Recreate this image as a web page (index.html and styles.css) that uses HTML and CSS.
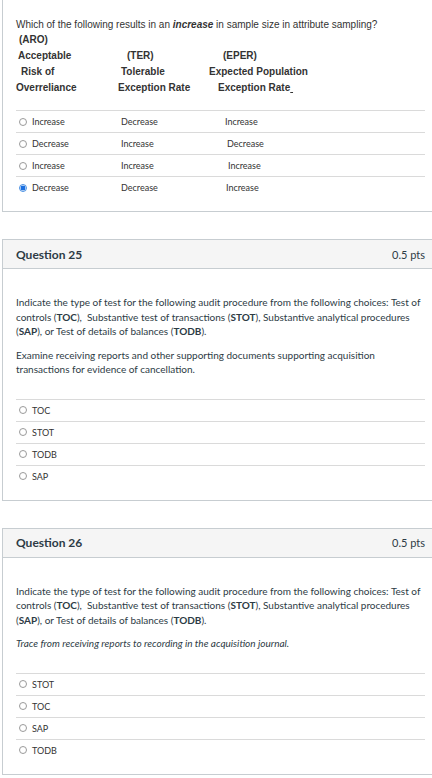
FILE: index.html
```html
<!DOCTYPE html>
<html>
<head>
<meta charset="utf-8">
<link rel="stylesheet" href="styles.css">
</head>
<body>
<div class="quiz">
  <section class="card card-first">
    <div class="body body-first">
      <p class="q1">Which of the following results in an <b><i>increase</i></b> in sample size in attribute sampling?</p>
      <div class="hdr-grid">
        <div class="c1 i3">(ARO)</div><div></div><div></div>
        <div class="c1 i2">Acceptable</div><div class="c2 i9">(TER)</div><div class="c3 i14">(EPER)</div>
        <div class="c1 i5">Risk of</div><div class="c2 i3">Tolerable</div><div class="c3">Expected Population</div>
        <div class="c1">Overreliance</div><div class="c2">Exception Rate</div><div class="c3 i9">Exception Rate<u>&nbsp;</u></div>
      </div>
      <ul class="answers">
        <li class="ans grid3"><span class="radio"></span><span>Increase</span><span>Decrease</span><span>Increase</span></li>
        <li class="ans grid3"><span class="radio"></span><span>Decrease</span><span>Increase</span><span class="s2">Decrease</span></li>
        <li class="ans grid3"><span class="radio"></span><span>Increase</span><span>Increase</span><span class="s3">Increase</span></li>
        <li class="ans grid3"><span class="radio checked"></span><span>Decrease</span><span>Decrease</span><span class="s1">Increase</span></li>
      </ul>
    </div>
  </section>

  <section class="card">
    <header class="head"><h2>Question 25</h2><span class="pts">0.5 pts</span></header>
    <div class="body">
      <p class="txt">Indicate the type of test for the following audit procedure from the following choices: Test of controls (<b>TOC</b>),&nbsp; Substantive test of transactions (<b>STOT</b>), Substantive analytical procedures (<b>SAP</b>), or Test of details of balances (<b>TODB</b>).</p>
      <p class="txt">Examine receiving reports and other supporting documents supporting acquisition transactions for evidence of cancellation.</p>
      <ul class="answers">
        <li class="ans"><span class="radio"></span><span>TOC</span></li>
        <li class="ans"><span class="radio"></span><span>STOT</span></li>
        <li class="ans"><span class="radio"></span><span>TODB</span></li>
        <li class="ans"><span class="radio"></span><span>SAP</span></li>
      </ul>
    </div>
  </section>

  <section class="card">
    <header class="head"><h2>Question 26</h2><span class="pts">0.5 pts</span></header>
    <div class="body">
      <p class="txt">Indicate the type of test for the following audit procedure from the following choices: Test of controls (<b>TOC</b>),&nbsp; Substantive test of transactions (<b>STOT</b>), Substantive analytical procedures (<b>SAP</b>), or Test of details of balances (<b>TODB</b>).</p>
      <p class="txt"><i>Trace from receiving reports to recording in the acquisition journal.</i></p>
      <ul class="answers">
        <li class="ans"><span class="radio"></span><span>STOT</span></li>
        <li class="ans"><span class="radio"></span><span>TOC</span></li>
        <li class="ans"><span class="radio"></span><span>SAP</span></li>
        <li class="ans"><span class="radio"></span><span>TODB</span></li>
      </ul>
    </div>
  </section>
</div>
</body>
</html>
```

FILE: styles.css
```css
html, body {
  margin: 0;
  padding: 0;
  background: #ffffff;
}
body {
  font-family: Lato, "Noto Sans", sans-serif;
  color: #2d3b45;
}
.quiz {
  padding-left: 2px;
  display: flex;
  flex-direction: column;
  gap: 27px;
}
.card {
  border: 1px solid #c7cdd1;
  border-right: none;
  background: #fff;
}
.card-first {
  border-top: none;
}
.head {
  background: #f5f5f5;
  border-bottom: 1px solid #c7cdd1;
  height: 28px;
  display: flex;
  align-items: center;
  justify-content: space-between;
  padding: 0 7px 0 13px;
}
.head h2 {
  margin: 0;
  font-size: 12px;
  font-weight: 700;
  color: #2d3b45;
}
.pts {
  font-size: 11px;
  color: #2d3b45;
}
.body {
  padding: 26px 7px 13px 13px;
}
.body-first {
  padding-top: 17px;
}
.q1 {
  margin: 0;
  font-family: "Liberation Sans", Arial, sans-serif;
  font-size: 10px;
  line-height: 15px;
  color: #333;
}
.hdr-grid {
  display: grid;
  grid-template-columns: 102px 91px 1fr;
  font-family: "Liberation Sans", Arial, sans-serif;
  font-size: 10px;
  font-weight: 700;
  line-height: 16px;
  color: #333;
}
.i2 { padding-left: 2px; }
.i3 { padding-left: 3px; }
.i5 { padding-left: 5px; }
.i9 { padding-left: 9px; }
.i14 { padding-left: 14px; }
.hdr-grid u {
  text-decoration: underline;
}
.txt {
  margin: 0 0 9px;
  font-size: 10px;
  line-height: 14.5px;
}
.answers {
  list-style: none;
  margin: 22px 0 0;
  padding: 0;
}
.body-first .answers {
  margin-top: 14px;
}
.ans {
  border-top: 1px solid #dadada;
  height: 21px;
  display: flex;
  align-items: center;
  font-size: 9px;
  color: #333;
}
.ans .radio {
  margin: 0 5px 0 3px;
}
.grid3 {
  display: grid;
  grid-template-columns: 16px 89px 104px 1fr;
  align-items: center;
}
.s1 { padding-left: 1px; }
.s2 { padding-left: 2px; }
.s3 { padding-left: 3px; }
.radio {
  display: inline-block;
  width: 6px;
  height: 6px;
  border: 1px solid #9a9a9a;
  border-radius: 50%;
  background: #fff;
  flex: none;
}
.radio.checked {
  border-color: #4a90e2;
  background: radial-gradient(circle, #1a6fe0 0 2.3px, #dbe9fb 2.6px);
}
```
